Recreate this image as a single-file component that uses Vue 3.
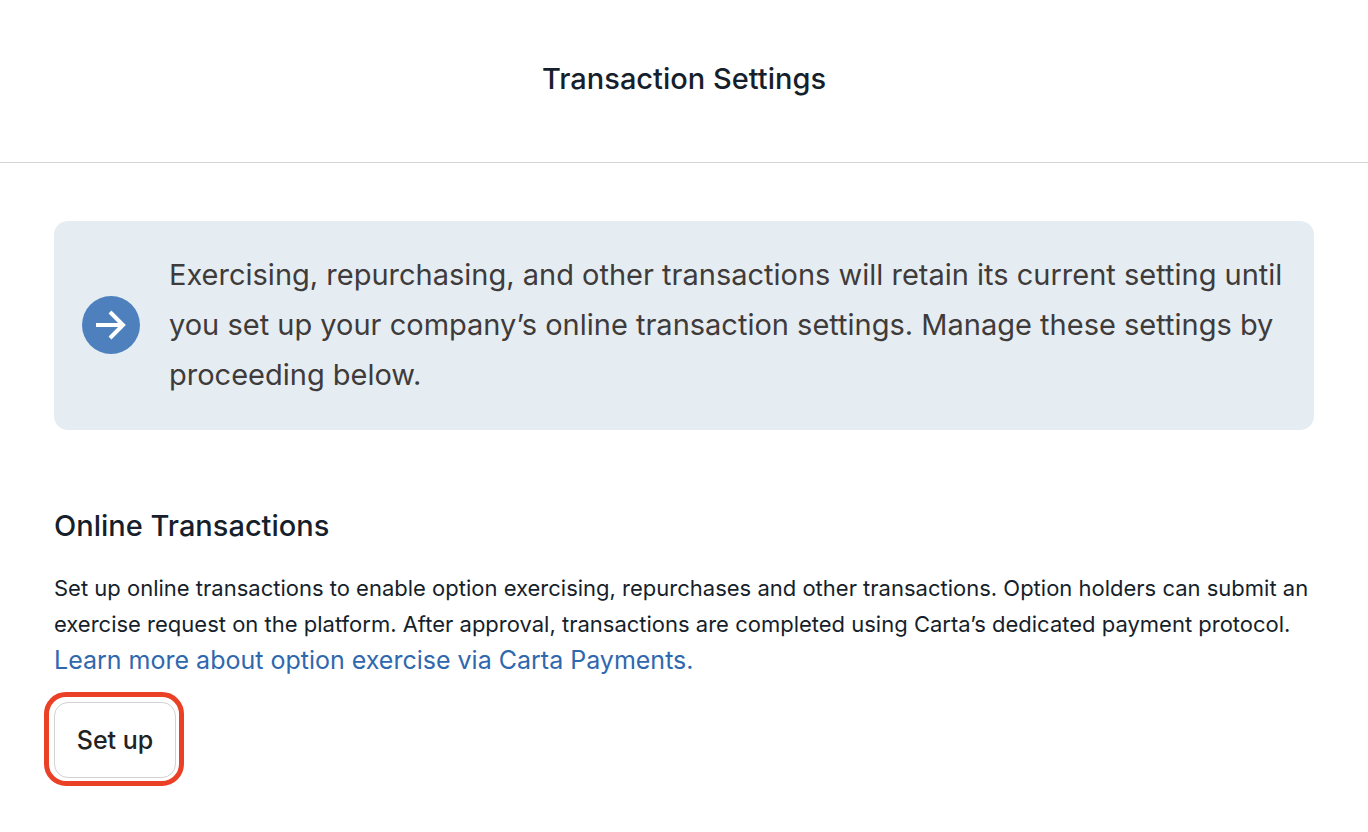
<script setup>
const learnMore = 'Learn more about option exercise via Carta Payments.'
</script>

<template>
  <div class="page">
    <header class="header">
      <h1 class="title">Transaction Settings</h1>
    </header>
    <main class="content">
      <section class="notice">
        <svg class="notice-icon" viewBox="0 0 58 58" aria-hidden="true">
          <circle cx="29" cy="29" r="29" fill="#4d80bd" />
          <path d="M14 29H40M28 16L41 29L28 42" fill="none" stroke="#fff" stroke-width="4" />
        </svg>
        <p class="notice-text">
          Exercising, repurchasing, and other transactions will retain its current setting until you set up your company’s online transaction settings. Manage these settings by proceeding below.
        </p>
      </section>
      <section class="online">
        <h2 class="subtitle">Online Transactions</h2>
        <p class="description">
          Set up online transactions to enable option exercising, repurchases and other transactions. Option holders can submit an exercise request on the platform. After approval, transactions are completed using Carta’s dedicated payment protocol.
          <a class="link" href="#">{{ learnMore }}</a>
        </p>
        <div class="highlight">
          <button class="setup" type="button">Set up</button>
        </div>
      </section>
    </main>
  </div>
</template>

<style>
body {
  margin: 0;
  background: #fff;
}
</style>

<style scoped>
.page {
  font-family: Inter, "Liberation Sans", sans-serif;
  color: #161f2b;
}
.header {
  padding: 58px 54px 62px;
  border-bottom: 1px solid #d4d4d4;
  text-align: center;
}
.title,
.subtitle {
  margin: 0;
  font-size: 29px;
  line-height: 42px;
  font-weight: 500;
}
.content {
  padding: 58px 54px 40px;
}
.notice {
  display: flex;
  align-items: center;
  gap: 29px;
  padding: 29px 28px 30px;
  border-radius: 14px;
  background: #e5edf2;
  color: #3f3b3b;
}
.notice-icon {
  flex: none;
  width: 58px;
  height: 58px;
}
.notice-text {
  margin: 0;
  font-size: 29px;
  line-height: 50px;
}
.online {
  padding-top: 75px;
}
.description {
  margin: 23px 0 0;
  font-size: 22px;
  line-height: 36px;
}
.link {
  display: block;
  font-size: 25px;
  color: #3068ae;
  text-decoration: none;
}
.highlight {
  width: fit-content;
  margin: 14px 0 0 -10px;
  padding: 5px 3px 3px 5px;
  border: 5px solid #ea4025;
  border-radius: 22px;
}
.setup {
  display: block;
  min-width: 122px;
  height: 76px;
  padding: 0 21px;
  border: 1px solid #d2d2d2;
  border-radius: 14px;
  background: #fff;
  color: #222;
  font-family: inherit;
  font-size: 25px;
  font-weight: 500;
}
</style>
